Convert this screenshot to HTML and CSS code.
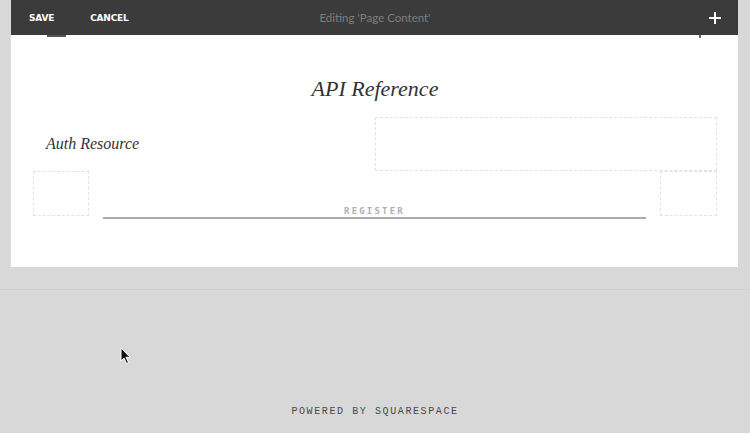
FILE: index.html
```html
<!DOCTYPE html>
<html>
<head>
<meta charset="utf-8">
<link rel="stylesheet" href="styles.css">
</head>
<body>
<div class="page">
  <div class="panel">
    <div class="toolbar">
      <div class="actions">
        <span class="act">SAVE</span>
        <span class="act">CANCEL</span>
      </div>
      <div class="editing">Editing 'Page Content'</div>
      <div class="plus">
        <svg width="12" height="12" viewBox="0 0 12 12"><path d="M6 0V12M0 6H12" stroke="#fff" stroke-width="2"/></svg>
      </div>
    </div>
    <div class="content">
      <div class="peek-left"></div>
      <div class="peek-right"></div>
      <h1 class="title">API Reference</h1>
      <div class="row1">
        <div class="auth">Auth Resource</div>
        <div class="dash big"></div>
      </div>
      <div class="row2">
        <div class="dash small"></div>
        <div class="reg-wrap">
          <div class="register">REGISTER</div>
        </div>
        <div class="dash small"></div>
      </div>
    </div>
  </div>
</div>
<div class="lower">
  <div class="footer">POWERED BY SQUARESPACE</div>
</div>
<svg class="cursor" width="12" height="18" viewBox="0 0 12 18"><path d="M1 1V14L4 11L6.5 16.5L8.5 15.5L6 10.2H10Z" fill="#111" stroke="#fff" stroke-width="1"/></svg>
</body>
</html>
```
FILE: styles.css
```css
html, body {
  margin: 0;
  padding: 0;
}
body {
  background: #d8d8d8;
  width: 750px;
  height: 433px;
  overflow: hidden;
  position: relative;
}
.page {
  padding: 0 12px 0 11px;
}
.panel {
  background: #fff;
  height: 267px;
  display: flex;
  flex-direction: column;
}
.toolbar {
  height: 35px;
  background: #3b3b3b;
  display: grid;
  grid-template-columns: 1fr auto 1fr;
  align-items: center;
  padding: 0 17px 0 18px;
}
.actions {
  display: flex;
  gap: 36px;
}
.act {
  font-family: "DejaVu Sans", sans-serif;
  font-weight: bold;
  font-size: 9px;
  color: #fff;
  letter-spacing: -0.2px;
}
.editing {
  font-family: "Lato", sans-serif;
  font-size: 11.5px;
  color: #7d7d7d;
}
.plus {
  justify-self: end;
  display: flex;
}
.content {
  flex: 1;
  position: relative;
  padding: 0 21px 0 22px;
}
.peek-left {
  position: absolute;
  left: 36px;
  top: 0;
  width: 19px;
  height: 2px;
  background: #555;
}
.peek-right {
  position: absolute;
  left: 688px;
  top: 0;
  width: 2px;
  height: 3px;
  background: #666;
}
.title {
  margin: 0;
  padding-top: 39px;
  height: 30px;
  line-height: 30px;
  text-align: center;
  font-family: "Liberation Serif", serif;
  font-style: italic;
  font-weight: normal;
  font-size: 22px;
  color: #333;
}
.row1 {
  margin-top: 13px;
  display: grid;
  grid-template-columns: 1fr 1fr;
  height: 54px;
}
.auth {
  padding-left: 13px;
  padding-top: 18px;
  font-family: "Liberation Serif", serif;
  font-style: italic;
  font-size: 16px;
  color: #333;
}
.dash {
  border: 1px dashed #e2e2e2;
  box-sizing: border-box;
}
.row2 {
  display: grid;
  grid-template-columns: 56px 1fr 57px;
  height: 45px;
}
.reg-wrap {
  padding: 0 14px;
  display: flex;
  flex-direction: column;
  justify-content: flex-end;
}
.register {
  border-bottom: 2px solid #ababab;
  text-align: center;
  font-family: "DejaVu Sans Mono", monospace;
  font-weight: bold;
  font-size: 9px;
  letter-spacing: 2.2px;
  color: #b0b0b0;
  line-height: 12px;
  margin-bottom: -3px;
}
.lower {
  margin-top: 22px;
  border-top: 1px solid #d0d0d0;
  height: 143px;
  display: flex;
  align-items: flex-end;
  justify-content: center;
}
.footer {
  font-family: "Liberation Mono", monospace;
  font-size: 10px;
  letter-spacing: 1.6px;
  color: #484848;
  padding-bottom: 16px;
}
.cursor {
  position: absolute;
  left: 120px;
  top: 347px;
}
```
